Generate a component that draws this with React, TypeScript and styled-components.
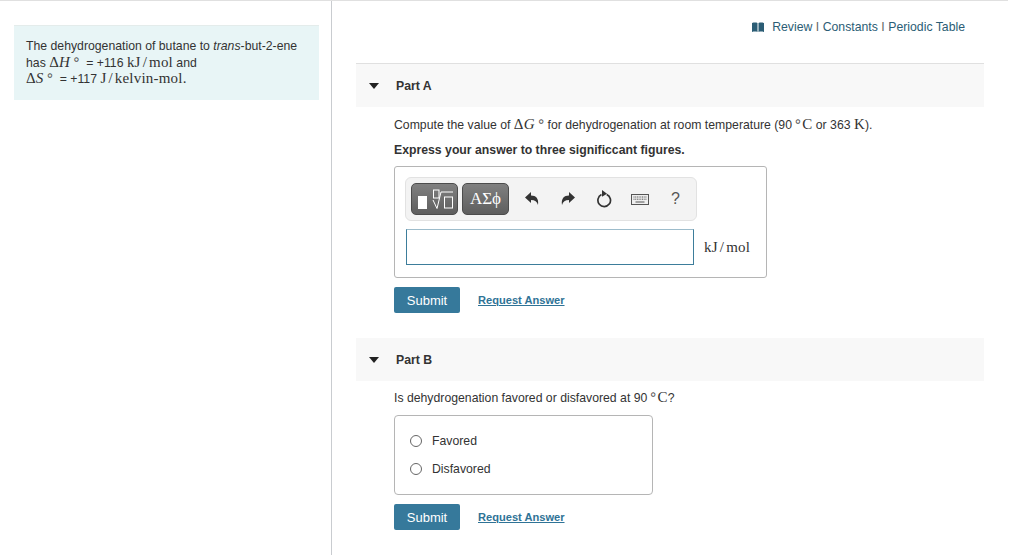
import { createGlobalStyle, styled } from 'styled-components';

const GlobalStyle = createGlobalStyle`
  html, body {
    margin: 0;
    padding: 0;
    background: #fff;
  }
  body {
    font-family: "Liberation Sans", Arial, sans-serif;
    font-size: 12.25px;
    color: #333;
    overflow: hidden;
  }
`;

const Page = styled.div`
  display: flex;
  width: 1008px;
  height: 555px;
  border-top: 1px solid #e0e0e0;
  box-sizing: border-box;
`;

const LeftColumn = styled.aside`
  box-sizing: border-box;
  width: 332px;
  height: 100%;
  padding: 24px 12px 0 14px;
  border-right: 1px solid #c9ccd0;
`;

const IntroBox = styled.div`
  box-sizing: border-box;
  height: 75px;
  padding: 12px 12px 0;
  border-top: 1px solid #e4eceb;
  background: #e8f5f6;
  line-height: 16.5px;
`;

const MathText = styled.span`
  font-family: "Liberation Serif", "Times New Roman", serif;
  font-size: 15px;
  letter-spacing: 0.2px;
  line-height: 1;
`;

const Slash = styled.span`
  margin: 0 2px;
`;

const Degree = styled.sup`
  font-family: "DejaVu Sans", sans-serif;
  font-size: 14px;
  line-height: 0;
  margin: 0 2px 0 2px;
  color: #555;
  vertical-align: 3px;
`;

const UnitDegree = styled(Degree)`
  margin: 0 0 0 -2px;
`;

const RightColumn = styled.main`
  flex: 1;
  min-width: 0;
  padding: 0 24px;
`;

const TopLinks = styled.nav`
  display: flex;
  justify-content: flex-end;
  align-items: center;
  box-sizing: border-box;
  height: 62px;
  padding: 0 19px 10px 0;
  color: #2b5d75;
`;

const BookIcon = styled.svg`
  width: 12px;
  height: 10px;
  margin-right: 8px;
`;

const LinkDivider = styled.span`
  color: #666;
  margin: 0 3.5px;
`;

const PartHeader = styled.header<{ $ruled?: boolean }>`
  display: flex;
  align-items: center;
  height: 43px;
  padding-left: 13px;
  background: #f8f8f8;
  border-top: ${({ $ruled }) => ($ruled ? '1px solid #e0e0e0' : '0')};
  font-weight: 700;
  color: #333;
`;

const Caret = styled.span`
  width: 0;
  height: 0;
  margin-right: 17px;
  border-left: 5.5px solid transparent;
  border-right: 5.5px solid transparent;
  border-top: 6px solid #222;
`;

const PartBody = styled.section`
  padding-left: 38px;
`;

const Question = styled.p<{ $top: number }>`
  margin: 0;
  padding-top: ${({ $top }) => $top}px;
  line-height: 18px;
`;

const Instruction = styled.p`
  margin: 7px 0 0;
  line-height: 18px;
  font-weight: 700;
`;

const AnswerCard = styled.div`
  box-sizing: border-box;
  width: 373px;
  height: 112px;
  margin-top: 7px;
  padding: 10px;
  border: 1px solid #b5b5b5;
  border-radius: 3px;
`;

const Toolbar = styled.div`
  display: flex;
  align-items: center;
  box-sizing: border-box;
  width: 292px;
  height: 44px;
  padding-left: 5px;
  gap: 4px;
  background: #f3f3f3;
  border: 1px solid #e2e2e2;
  border-radius: 6px;
`;

const TemplateButton = styled.div`
  display: flex;
  align-items: center;
  justify-content: center;
  box-sizing: border-box;
  width: 47px;
  height: 32px;
  background: linear-gradient(#808080, #5e5e5e);
  border: 1px solid #4c4c4c;
  border-radius: 5px;
  color: #fff;
  font-family: "Liberation Serif", serif;
  font-size: 17px;
`;

const ToolIcon = styled.svg<{ $gap: number }>`
  display: block;
  flex: none;
  margin-left: ${({ $gap }) => $gap}px;
`;

const HelpMark = styled.span`
  margin-left: 18px;
  font-size: 16px;
  color: #555;
`;

const InputRow = styled.div`
  display: flex;
  align-items: center;
  margin-top: 8px;
  gap: 10px;
`;

const AnswerInput = styled.div`
  box-sizing: border-box;
  width: 288px;
  height: 36px;
  margin-left: 1px;
  border: 1px solid #3d7d9b;
  border-top-color: #9dbccb;
`;

const ActionRow = styled.div<{ $top: number }>`
  display: flex;
  align-items: center;
  gap: 18px;
  margin-top: ${({ $top }) => $top}px;
`;

const SubmitButton = styled.button`
  width: 66px;
  height: 26px;
  padding: 0;
  border: 0;
  border-radius: 2px;
  background: #36799b;
  color: #fff;
  font: 13px "Liberation Sans", Arial, sans-serif;
`;

const RequestLink = styled.a`
  margin-bottom: 1px;
  color: #2f7396;
  font-size: 11.1px;
  font-weight: 700;
  text-decoration: underline;
`;

const ChoiceCard = styled.div`
  box-sizing: border-box;
  display: flex;
  flex-direction: column;
  gap: 10px;
  width: 259px;
  height: 80px;
  margin-top: 8px;
  padding: 16px 15px 0;
  border: 1px solid #b5b5b5;
  border-radius: 4px;
`;

const Choice = styled.label`
  display: flex;
  align-items: center;
  gap: 10px;
  height: 18px;
`;

const RadioCircle = styled.span`
  box-sizing: border-box;
  width: 12px;
  height: 12px;
  border: 1px solid #666;
  border-radius: 50%;
  background: #fff;
`;

const PartSpacer = styled.div`
  height: 25px;
`;

const Actions = ({ top }: { top: number }) => (
  <ActionRow $top={top}>
    <SubmitButton>Submit</SubmitButton>
    <RequestLink>Request Answer</RequestLink>
  </ActionRow>
);

export default function App() {
  return (
    <>
      <GlobalStyle />
      <Page>
        <LeftColumn>
          <IntroBox>
            The dehydrogenation of butane to <em>trans</em>-but-2-ene
            <br />
            has <MathText>Δ<i>H</i></MathText><Degree>∘</Degree> = +116 <MathText>kJ<Slash>/</Slash>mol</MathText> and
            <br />
            <MathText>Δ<i>S</i></MathText><Degree>∘</Degree> = +117 <MathText>J<Slash>/</Slash>kelvin-mol.</MathText>
          </IntroBox>
        </LeftColumn>
        <RightColumn>
          <TopLinks>
            <BookIcon viewBox="0 0 12 10">
              <path d="M0 1c2-.6 4-.6 5.500 0v9C4 9.400 2 9.400 0 10zM6.500 1c1.500-.6 3.500-.6 5.500 0v9c-2-.6-4-.6-5.500 0z" fill="#2b5d75" />
            </BookIcon>
            Review
            <LinkDivider>I</LinkDivider>
            Constants
            <LinkDivider>I</LinkDivider>
            Periodic Table
          </TopLinks>

          <PartHeader $ruled>
            <Caret />
            Part A
          </PartHeader>
          <PartBody>
            <Question $top={9}>
              Compute the value of <MathText>Δ<i>G</i></MathText><Degree>∘</Degree>for dehydrogenation at room temperature (90 <UnitDegree>∘</UnitDegree><MathText>C</MathText> or 363 <MathText>K</MathText>).
            </Question>
            <Instruction>Express your answer to three significcant figures.</Instruction>
            <AnswerCard>
              <Toolbar>
                <TemplateButton>
                  <svg width="45" height="30" viewBox="0 0 45 30">
                    <rect x="6" y="12" width="9" height="13" fill="#fff" />
                    <rect x="21.500" y="6" width="5.500" height="8" fill="none" stroke="#fff" />
                    <path d="M21 16l4 8.500 4-16.500h12" fill="none" stroke="#fff" />
                    <rect x="32.500" y="13" width="8" height="11" fill="none" stroke="#fff" />
                  </svg>
                </TemplateButton>
                <TemplateButton>ΑΣϕ</TemplateButton>
                <ToolIcon $gap={12} width={14} height={14} viewBox="0 0 14 14">
                  <path d="M0 5.500 6 0v3.400c5 0 8 3 7 9.600-1-3.400-3-5-7-5V11z" fill="#333" />
                </ToolIcon>
                <ToolIcon $gap={18} width={14} height={14} viewBox="0 0 14 14">
                  <path d="M14 5.500 8 0v3.400C3 3.400 0 6.400 1 13c1-3.400 3-5 7-5v3z" fill="#333" />
                </ToolIcon>
                <ToolIcon $gap={17} width={16} height={18} viewBox="0 0 16 18">
                  <path d="M5.500 4.600a6.300 6.300 0 1 0 5.200-.1" fill="none" stroke="#333" strokeWidth="1.700" />
                  <path d="M6 0l5 3.800-5 3z" fill="#333" />
                </ToolIcon>
                <ToolIcon $gap={15} width={18} height={11} viewBox="0 0 18 11">
                  <rect x="0.500" y="0.500" width="17" height="10" fill="#eee" stroke="#555" />
                  <path d="M2.500 3h13M2.500 5.200h13" stroke="#555" strokeDasharray="1 .7" />
                  <path d="M4.500 8h9" stroke="#555" />
                </ToolIcon>
                <HelpMark>?</HelpMark>
              </Toolbar>
              <InputRow>
                <AnswerInput />
                <MathText>kJ<Slash>/</Slash>mol</MathText>
              </InputRow>
            </AnswerCard>
            <Actions top={9} />
          </PartBody>

          <PartSpacer />

          <PartHeader>
            <Caret />
            Part B
          </PartHeader>
          <PartBody>
            <Question $top={8}>
              Is dehydrogenation favored or disfavored at 90 <UnitDegree>∘</UnitDegree><MathText>C</MathText>?
            </Question>
            <ChoiceCard>
              <Choice>
                <RadioCircle />
                Favored
              </Choice>
              <Choice>
                <RadioCircle />
                Disfavored
              </Choice>
            </ChoiceCard>
            <Actions top={9} />
          </PartBody>
        </RightColumn>
      </Page>
    </>
  );
}
